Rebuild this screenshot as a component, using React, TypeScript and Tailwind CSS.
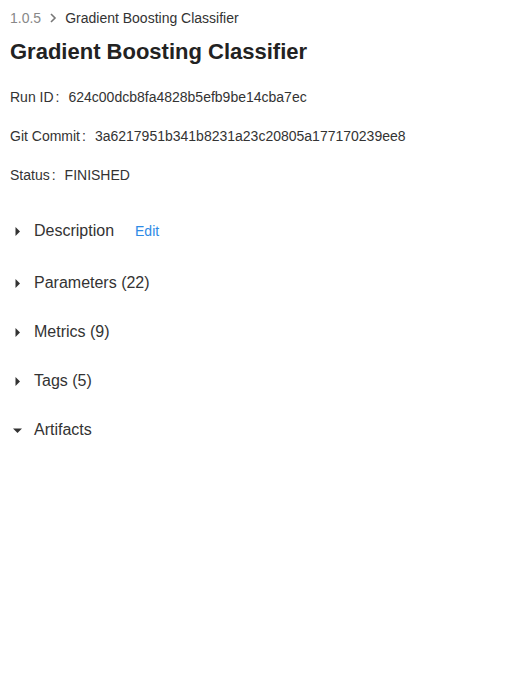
import React from 'react';

const sections = [
  { label: 'Description', open: false, edit: true },
  { label: 'Parameters (22)', open: false },
  { label: 'Metrics (9)', open: false },
  { label: 'Tags (5)', open: false },
  { label: 'Artifacts', open: true },
];

function Caret({ open }: { open: boolean }) {
  return (
    <svg width="9" height="9" viewBox="0 0 9 9" className="shrink-0">
      {open ? <path d="M0 2.5 L9 2.5 L4.5 7 Z" fill="#333" /> : <path d="M2.5 0 L7 4.5 L2.5 9 Z" fill="#333" />}
    </svg>
  );
}

export default function App() {
  return (
    <div className="min-h-screen bg-white px-[10px] text-[#333]" style={{ fontFamily: '"Liberation Sans", Arial, sans-serif' }}>
      {/* Breadcrumb */}
      <div className="flex h-[36px] items-center text-[14px]">
        <span className="text-[#888]">1.0.5</span>
        <svg width="8" height="10" viewBox="0 0 8 10" className="mx-[8px]">
          <path d="M2 1 L6 5 L2 9" stroke="#777" strokeWidth="1.6" fill="none" />
        </svg>
        <span>Gradient Boosting Classifier</span>
      </div>
      <h1 className="text-[22px] font-bold leading-[32px] text-[#222]">Gradient Boosting Classifier</h1>

      {/* Run info */}
      <div className="mt-[19px] flex flex-col gap-[19px] text-[14px] leading-[20px]">
        <div>
          Run ID<span className="ml-[2px] mr-[9px]">:</span>624c00dcb8fa4828b5efb9be14cba7ec
        </div>
        <div>
          Git Commit<span className="ml-[2px] mr-[9px]">:</span>3a6217951b341b8231a23c20805a177170239ee8
        </div>
        <div>
          Status<span className="ml-[2px] mr-[9px]">:</span>FINISHED
        </div>
      </div>

      {/* Collapsible sections */}
      <div className="mt-[34px] flex flex-col gap-[25px]">
        {sections.map((s) => (
          <div key={s.label} className={`flex h-[24px] items-center text-[16px] ${s.edit ? 'mb-[3px]' : ''}`}>
            <span className="ml-[2px] mr-[12px] flex w-[10px] justify-center">
              <Caret open={s.open} />
            </span>
            <span>{s.label}</span>
            {s.edit && <span className="ml-[21px] text-[14px] text-[#2d8ae6]">Edit</span>}
          </div>
        ))}
      </div>
    </div>
  );
}
